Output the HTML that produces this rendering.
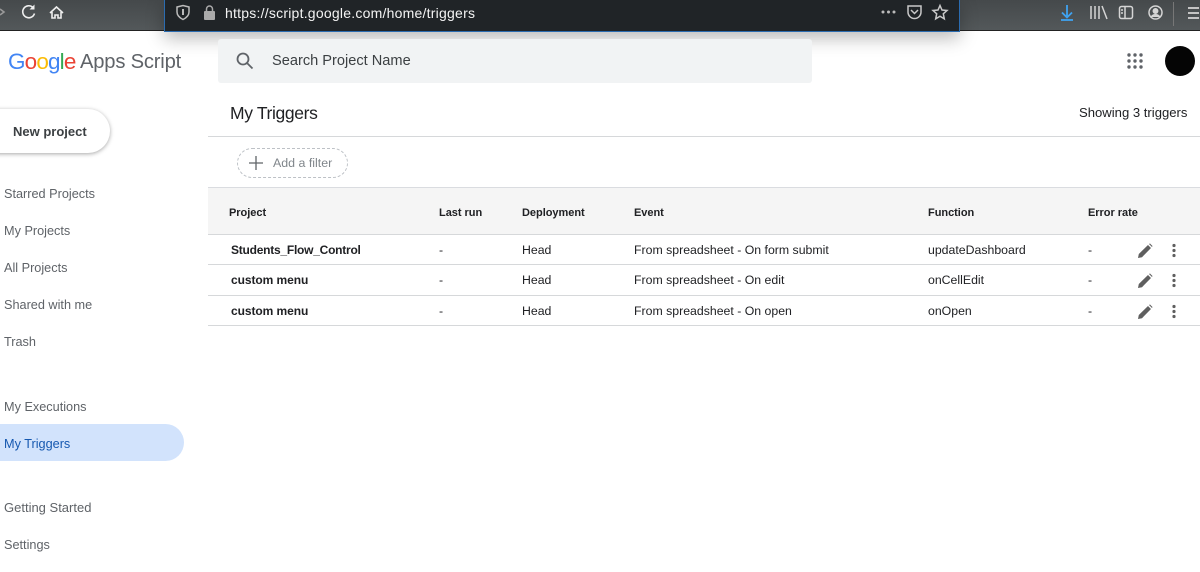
<!DOCTYPE html>
<html><head><meta charset="utf-8"><style>
html,body{margin:0;padding:0;background:#fff}
#p{position:relative;width:1200px;height:572px;overflow:hidden;background:#fff;font-family:"Liberation Sans",sans-serif;color:#3c4043}
#p div,#p svg{position:absolute}
.t{white-space:nowrap;line-height:16px}
.n{font-size:12.7px;color:#5f6368;left:4px}
.h{font-size:11px;font-weight:bold;color:#202124;top:205px;letter-spacing:-.03px}
.c{font-size:12.3px;color:#202124}
.b{font-size:12px;font-weight:bold;color:#202124;left:231px;letter-spacing:-.07px}
.l{left:208px;width:992px;height:1px;background:#d6d8da}
</style></head><body><div id="p">
<div style="left:0;top:0;width:1200px;height:30px;background:linear-gradient(#45494b,#53585a)"></div>
<div style="left:0;top:30px;width:1200px;height:1px;background:#222"></div>
<div style="left:164px;top:0;width:796px;height:32px;background:#202427;border:solid #2b6cb0;border-width:0 1px 1px 1px;box-sizing:border-box;box-shadow:0 6px 18px rgba(0,0,0,.28)"></div>
<svg style="left:0;top:0" width="70" height="30" fill="none" stroke="#eee" stroke-width="1.6"><path d="M0 9l4 3-4 3" stroke="#999"/><path d="M33 7.5a6 6 0 1 0 1.5 6"/><path d="M34.500 4.500v5h-5" fill="#eee" stroke="none"/><path d="M50 13l6.500-6 6.500 6M52 12v6h3v-3h3v3h3v-6"/></svg>
<svg style="left:175px;top:4px" width="40" height="18" fill="none"><path d="M2 3l6-1.500 6 1.500v5c0 4-3 6-6 7.500-3-1.500-6-3.500-6-7.500z" stroke="#bbb" stroke-width="1.500"/><rect x="7" y="5" width="2" height="6" fill="#bbb"/><rect x="29" y="7" width="11" height="9" rx="1" fill="#aaa"/><path d="M31.500 7V5a3 3 0 0 1 6 0v2" stroke="#aaa" stroke-width="1.500"/></svg>
<div class="t" style="left:225px;top:5px;font-size:14px;color:#f4f4f4;letter-spacing:.23px">https://script.google.com/home/triggers</div>
<svg style="left:880px;top:2px" width="70" height="24" fill="none" stroke="#c8c8c8" stroke-width="1.500"><circle cx="3" cy="10" r="1.500" fill="#bbb" stroke="none"/><circle cx="8.500" cy="10" r="1.500" fill="#bbb" stroke="none"/><circle cx="14" cy="10" r="1.500" fill="#bbb" stroke="none"/><path d="M28 4h13v6a6.500 6.500 0 0 1-13 0z"/><path d="M31 8l3.500 3.500L38 8"/><path d="M60 3.500l2 4.500 5 .5-3.700 3.300 1 5-4.300-2.600-4.300 2.600 1-5L53 8.500l5-.5z"/></svg>
<svg style="left:1055px;top:2px" width="145" height="24" fill="none" stroke="#d5d5d5" stroke-width="1.500"><path d="M12 3v12M7 10.500l5 5 5-5" stroke="#3fa2f0" stroke-width="1.800"/><path d="M6 18h12" stroke="#3fa2f0" stroke-width="1.800"/><path d="M36 4v13M40 4v13M44 4v13M47 4l5 13"/><rect x="64.500" y="4.500" width="13" height="12" rx="2"/><path d="M70 5v12M66 8h2M66 11h2"/><circle cx="100.500" cy="10.500" r="6.500"/><circle cx="100.500" cy="9" r="2.200" fill="#d5d5d5"/><path d="M96.500 15c1-3 7-3 8 0" fill="#d5d5d5"/><path d="M118.500 0v26" stroke="#777" stroke-width="1"/><path d="M133 6h11M133 11h11M133 16h11" stroke-width="1.800"/></svg>

<div class="t" style="left:8px;top:49px;font-size:22.500px;line-height:26px;letter-spacing:-.85px"><span style="color:#4285f4">G</span><span style="color:#ea4335">o</span><span style="color:#fbbc05">o</span><span style="color:#4285f4">g</span><span style="color:#34a853">l</span><span style="color:#ea4335">e</span></div>
<div class="t" style="left:80px;top:49px;font-size:20.200px;line-height:26px;color:#5f6368;letter-spacing:-.2px">Apps Script</div>
<div style="left:218px;top:39px;width:594px;height:44px;background:#f1f3f4;border-radius:3px"></div>
<svg style="left:235px;top:51px" width="20" height="20" fill="none" stroke="#5f6368" stroke-width="1.800"><circle cx="8" cy="8" r="5.500"/><path d="M12 12l5.500 5.500"/></svg>
<div class="t" style="left:272px;top:53px;font-size:14.600px;color:#3c4043">Search Project Name</div>
<svg style="left:1127px;top:53px" width="16" height="16" fill="#5f6368"><circle cx="2" cy="2" r="1.700"/><circle cx="8" cy="2" r="1.700"/><circle cx="14" cy="2" r="1.700"/><circle cx="2" cy="8" r="1.700"/><circle cx="8" cy="8" r="1.700"/><circle cx="14" cy="8" r="1.700"/><circle cx="2" cy="14" r="1.700"/><circle cx="8" cy="14" r="1.700"/><circle cx="14" cy="14" r="1.700"/></svg>
<div style="left:1165px;top:46px;width:30px;height:30px;border-radius:50%;background:#050505"></div>

<div style="left:-30px;top:109px;width:140px;height:44px;border-radius:22px;background:#fff;box-shadow:0 1px 4px rgba(0,0,0,.35)"></div>
<div class="t" style="left:13px;top:124px;font-size:13px;font-weight:bold;color:#3c4043">New project</div>
<div class="t n" style="top:186px">Starred Projects</div>
<div class="t n" style="top:223px">My Projects</div>
<div class="t n" style="top:260px">All Projects</div>
<div class="t n" style="top:297px">Shared with me</div>
<div class="t n" style="top:334px">Trash</div>
<div class="t n" style="top:399px">My Executions</div>
<div style="left:-20px;top:424px;width:204px;height:37px;background:#d2e3fc;border-radius:0 19px 19px 0"></div>
<div class="t n" style="top:436px;color:#1558b0">My Triggers</div>
<div class="t n" style="top:500px;font-size:13px">Getting Started</div>
<div class="t n" style="top:537px">Settings</div>

<div class="t" style="left:230px;top:102px;font-size:17.500px;line-height:22px;color:#202124;letter-spacing:-.35px">My Triggers</div>
<div class="t" style="left:1079px;top:105px;font-size:13.100px;color:#202124">Showing 3 triggers</div>
<div class="l" style="top:136px"></div>
<div style="left:237px;top:148px;width:109px;height:28px;border:1px dashed #bdc1c6;border-radius:15px"></div>
<svg style="left:248px;top:155px" width="16" height="16" stroke="#5f6368" stroke-width="1.300"><path d="M8 1v14M1 8h14"/></svg>
<div class="t" style="left:273px;top:155px;font-size:12.400px;color:#80868b">Add a filter</div>
<div style="left:208px;top:187px;width:992px;height:48px;background:#f5f5f5;border-top:1px solid #dadce0;border-bottom:1px solid #d6d8da;box-sizing:border-box"></div>
<div class="t h" style="left:229px">Project</div>
<div class="t h" style="left:439px">Last run</div>
<div class="t h" style="left:522px">Deployment</div>
<div class="t h" style="left:634px">Event</div>
<div class="t h" style="left:928px">Function</div>
<div class="t h" style="left:1088px">Error rate</div>

<div class="t b" style="top:242px;letter-spacing:-.24px">Students_Flow_Control</div>
<div class="t c" style="left:439px;top:242px">-</div>
<div class="t c" style="left:522px;top:242px">Head</div>
<div class="t c" style="left:634px;top:242px">From spreadsheet - On form submit</div>
<div class="t c" style="left:928px;top:242px">updateDashboard</div>
<div class="t c" style="left:1088px;top:242px">-</div>
<div class="l" style="top:264px"></div>
<div class="t b" style="top:272px">custom menu</div>
<div class="t c" style="left:439px;top:272px">-</div>
<div class="t c" style="left:522px;top:272px">Head</div>
<div class="t c" style="left:634px;top:272px">From spreadsheet - On edit</div>
<div class="t c" style="left:928px;top:272px">onCellEdit</div>
<div class="t c" style="left:1088px;top:272px">-</div>
<div class="l" style="top:295px"></div>
<div class="t b" style="top:303px">custom menu</div>
<div class="t c" style="left:439px;top:303px">-</div>
<div class="t c" style="left:522px;top:303px">Head</div>
<div class="t c" style="left:634px;top:303px">From spreadsheet - On open</div>
<div class="t c" style="left:928px;top:303px">onOpen</div>
<div class="t c" style="left:1088px;top:303px">-</div>
<div class="l" style="top:325px"></div>

<svg style="left:1137px;top:243px" width="46" height="16" fill="#5f5f5f"><path d="M1 15l.8-4L11 2l3 3-9 9.200zM12 1l1-.5 2.500 2.500-.5 1z"/><circle cx="37" cy="2.500" r="1.600"/><circle cx="37" cy="7.500" r="1.600"/><circle cx="37" cy="12.500" r="1.600"/></svg>
<svg style="left:1137px;top:273px" width="46" height="16" fill="#5f5f5f"><path d="M1 15l.8-4L11 2l3 3-9 9.200zM12 1l1-.5 2.500 2.500-.5 1z"/><circle cx="37" cy="2.500" r="1.600"/><circle cx="37" cy="7.500" r="1.600"/><circle cx="37" cy="12.500" r="1.600"/></svg>
<svg style="left:1137px;top:304px" width="46" height="16" fill="#5f5f5f"><path d="M1 15l.8-4L11 2l3 3-9 9.200zM12 1l1-.5 2.500 2.500-.5 1z"/><circle cx="37" cy="2.500" r="1.600"/><circle cx="37" cy="7.500" r="1.600"/><circle cx="37" cy="12.500" r="1.600"/></svg>
</div></body></html>
